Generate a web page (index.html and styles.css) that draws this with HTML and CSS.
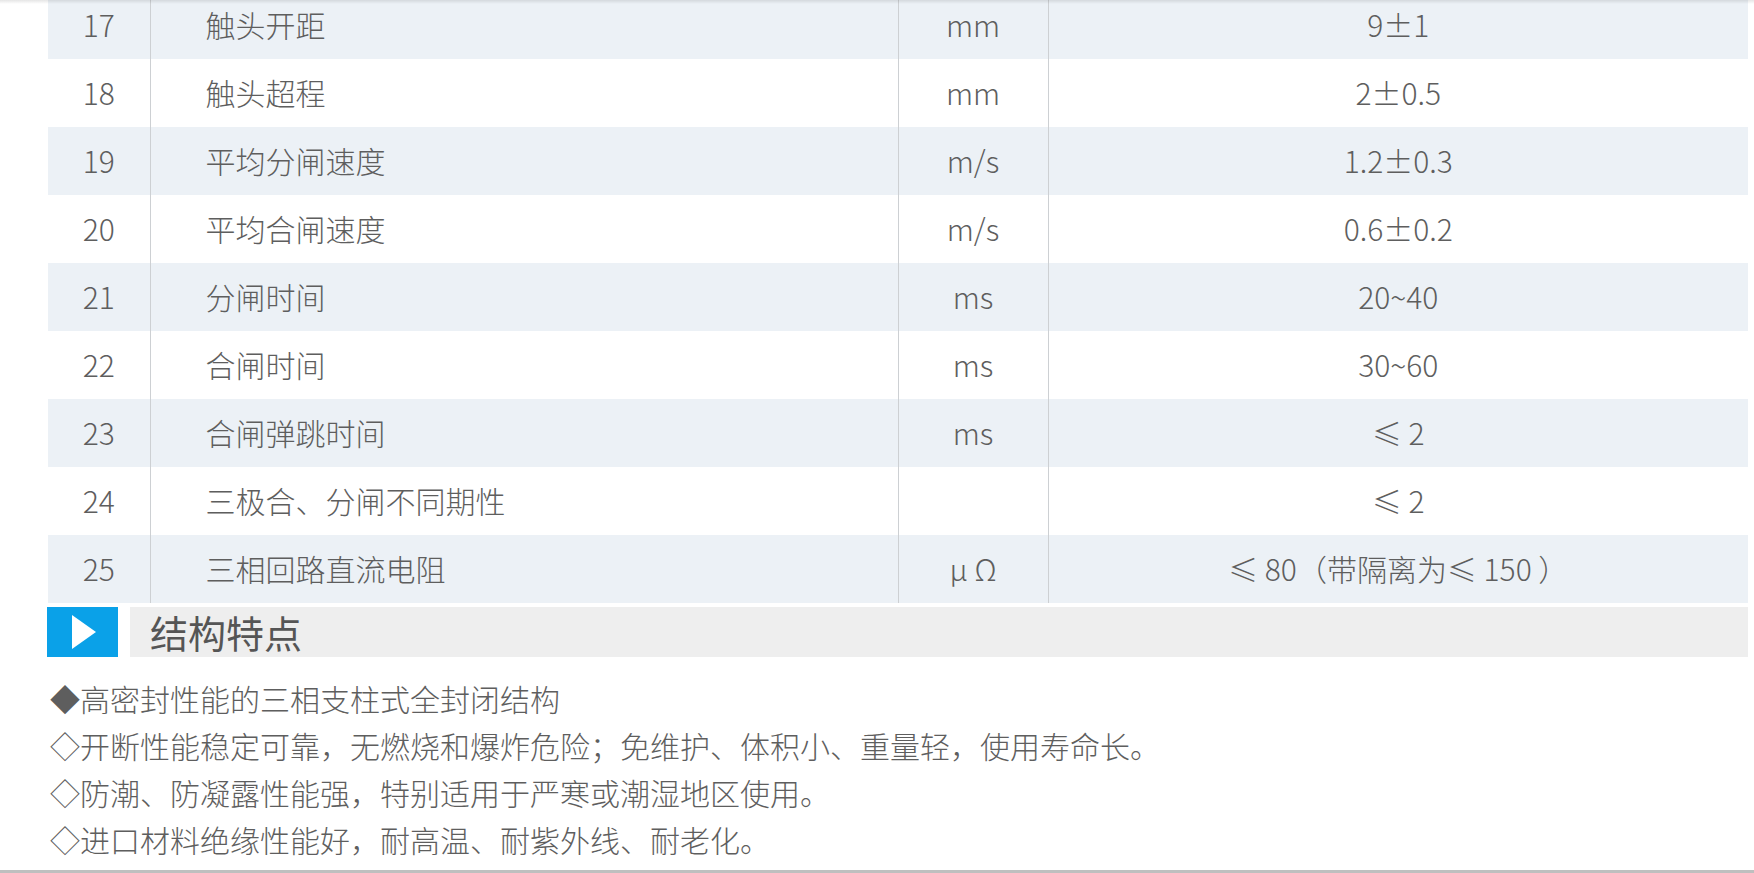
FILE: index.html
```html
<!DOCTYPE html>
<html lang="zh-CN">
<head>
<meta charset="utf-8">
<title>参数</title>
<link rel="stylesheet" href="styles.css">
</head>
<body>
<div class="top-shadow"></div>
<div class="page">
  <table class="spec">
    <colgroup>
      <col class="c-no"><col class="c-name"><col class="c-unit"><col class="c-val">
    </colgroup>
    <tbody>
      <tr class="shade"><td class="no">17</td><td class="name">触头开距</td><td class="unit">mm</td><td class="val">9±1</td></tr>
      <tr><td class="no">18</td><td class="name">触头超程</td><td class="unit">mm</td><td class="val">2±0.5</td></tr>
      <tr class="shade"><td class="no">19</td><td class="name">平均分闸速度</td><td class="unit">m/s</td><td class="val">1.2±0.3</td></tr>
      <tr><td class="no">20</td><td class="name">平均合闸速度</td><td class="unit">m/s</td><td class="val">0.6±0.2</td></tr>
      <tr class="shade"><td class="no">21</td><td class="name">分闸时间</td><td class="unit">ms</td><td class="val">20~40</td></tr>
      <tr><td class="no">22</td><td class="name">合闸时间</td><td class="unit">ms</td><td class="val">30~60</td></tr>
      <tr class="shade"><td class="no">23</td><td class="name">合闸弹跳时间</td><td class="unit">ms</td><td class="val">≤ 2</td></tr>
      <tr><td class="no">24</td><td class="name">三极合、分闸不同期性</td><td class="unit"></td><td class="val">≤ 2</td></tr>
      <tr class="shade"><td class="no">25</td><td class="name">三相回路直流电阻</td><td class="unit">μ Ω</td><td class="val">≤ 80（带隔离为≤ 150 ）</td></tr>
    </tbody>
  </table>

  <div class="section-head">
    <div class="head-icon">
      <svg width="24" height="34" viewBox="0 0 24 34"><polygon points="0,0 24,17 0,34" fill="#ffffff"/></svg>
    </div>
    <div class="head-bar">结构特点</div>
  </div>

  <ul class="features">
    <li>◆高密封性能的三相支柱式全封闭结构</li>
    <li>◇开断性能稳定可靠，无燃烧和爆炸危险；免维护、体积小、重量轻，使用寿命长。</li>
    <li>◇防潮、防凝露性能强，特别适用于严寒或潮湿地区使用。</li>
    <li>◇进口材料绝缘性能好，耐高温、耐紫外线、耐老化。</li>
  </ul>
</div>
<div class="bottom-line"></div>
</body>
</html>
```

FILE: styles.css
```css
html, body {
  margin: 0;
  padding: 0;
  background: #ffffff;
}
body {
  width: 1754px;
  height: 873px;
  overflow: hidden;
  position: relative;
  font-family: "Noto Sans CJK SC Light", "Noto Sans CJK SC", "Noto Sans", sans-serif;
  font-weight: 300;
  color: #5e5e5e;
}
.top-shadow {
  position: absolute;
  left: 0;
  top: 0;
  width: 100%;
  height: 4px;
  background: linear-gradient(rgba(0,0,0,0.10), rgba(0,0,0,0));
  z-index: 2;
}
.page {
  padding-left: 48px;
  width: 1700px;
}
.spec {
  border-collapse: collapse;
  width: 1700px;
  table-layout: fixed;
  margin-top: -9px;
  font-size: 30px;
}
.c-no { width: 102px; }
.c-name { width: 748px; }
.c-unit { width: 150px; }
.c-val { width: 700px; }
.spec td {
  height: 68px;
  padding: 0 0 2px 0;
  box-sizing: border-box;
  line-height: 34px;
  vertical-align: middle;
  white-space: nowrap;
  border-left: 1.5px solid #cdd0d3;
}
.spec td.name { padding-left: 55px; }
.spec td.no { border-left: none; text-align: center; }
.spec td.unit { text-align: center; }
.spec td.val { text-align: center; }
.spec tr.shade td { background: #ecf1f6; }

.section-head {
  display: flex;
  margin-top: 4px;
  height: 50px;
}
.head-icon {
  width: 71px;
  height: 50px;
  background: #0aa1e8;
  display: flex;
  align-items: center;
  justify-content: center;
  margin-left: -1px;
}
.head-icon svg { display: block; margin-left: 2px; }
.head-bar {
  flex: 1;
  margin-left: 12px;
  background: #eeeeee;
  font-family: "Noto Sans CJK SC", sans-serif;
  font-size: 38px;
  line-height: 50px;
  padding-left: 20px;
  color: #555555;
  font-weight: 400;
}
.features {
  list-style: none;
  margin: 18px 0 0 0;
  padding: 0 0 0 2px;
  font-size: 30px;
  line-height: 47px;
}
.features li { white-space: nowrap; }
.bottom-line {
  position: absolute;
  left: 0;
  bottom: 0;
  width: 100%;
  height: 3px;
  background: #bfbfbf;
}
```
